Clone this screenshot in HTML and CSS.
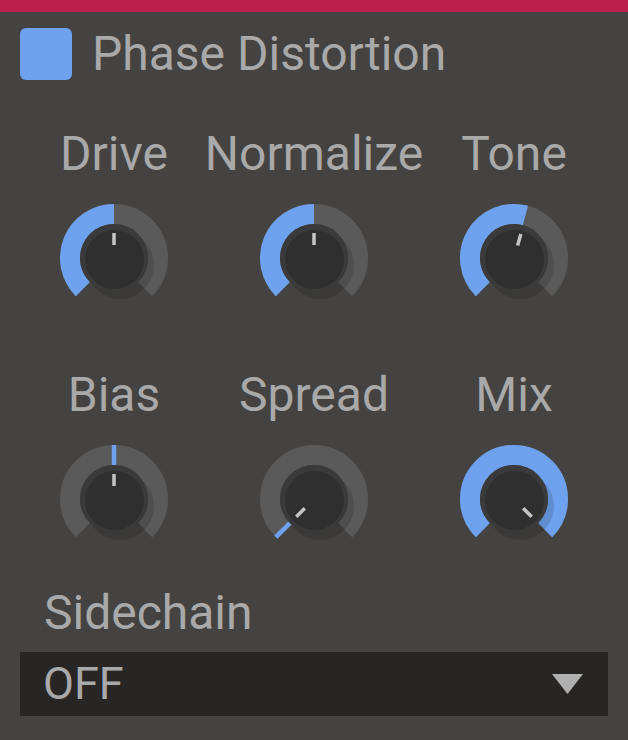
FILE: index.html
```html
<!DOCTYPE html>
<html lang="en">
<head>
    <meta charset="UTF-8">
    <meta name="viewport" content="width=device-width, initial-scale=1.0">
    <title>Phase Distortion</title>
    <link rel="stylesheet" href="styles.css">
</head>
<body>
    <div class="top-bar"></div>

    <div class="header">
        <div class="enable-box"></div>
        <div class="title">Phase Distortion</div>
    </div>

    <div class="knobs">
        <div class="knob">
            <div class="knob-label">Drive</div>
            <svg class="knob-dial" width="120" height="120" viewBox="0 0 120 120">
                <path class="track" d="M28.89 91.11 A44 44 0 1 1 91.11 91.11"/>
                <path class="value" d="M28.89 91.11 A44 44 0 0 1 60 16"/>
                <circle class="shadow" cx="66" cy="67" r="34"/>
                <circle class="rim" cx="60" cy="60" r="34"/>
                <circle class="cap" cx="60.5" cy="61.5" r="29.5"/>
                <line class="pointer" x1="60" y1="35" x2="60" y2="47" transform="rotate(0 60 60)"/>
            </svg>
        </div>
        <div class="knob">
            <div class="knob-label">Normalize</div>
            <svg class="knob-dial" width="120" height="120" viewBox="0 0 120 120">
                <path class="track" d="M28.89 91.11 A44 44 0 1 1 91.11 91.11"/>
                <path class="value" d="M28.89 91.11 A44 44 0 0 1 60 16"/>
                <circle class="shadow" cx="66" cy="67" r="34"/>
                <circle class="rim" cx="60" cy="60" r="34"/>
                <circle class="cap" cx="60.5" cy="61.5" r="29.5"/>
                <line class="pointer" x1="60" y1="35" x2="60" y2="47" transform="rotate(0 60 60)"/>
            </svg>
        </div>
        <div class="knob">
            <div class="knob-label">Tone</div>
            <svg class="knob-dial" width="120" height="120" viewBox="0 0 120 120">
                <path class="track" d="M28.89 91.11 A44 44 0 1 1 91.11 91.11"/>
                <path class="value" d="M28.89 91.11 A44 44 0 0 1 71.39 17.50"/>
                <circle class="shadow" cx="66" cy="67" r="34"/>
                <circle class="rim" cx="60" cy="60" r="34"/>
                <circle class="cap" cx="60.5" cy="61.5" r="29.5"/>
                <line class="pointer" x1="60" y1="35" x2="60" y2="47" transform="rotate(16 60 60)"/>
            </svg>
        </div>

        <div class="knob">
            <div class="knob-label">Bias</div>
            <svg class="knob-dial" width="120" height="120" viewBox="0 0 120 120">
                <path class="track" d="M28.89 91.11 A44 44 0 1 1 91.11 91.11"/>
                <line class="tick" x1="60" y1="6" x2="60" y2="26"/>
                <circle class="shadow" cx="66" cy="67" r="34"/>
                <circle class="rim" cx="60" cy="60" r="34"/>
                <circle class="cap" cx="60.5" cy="61.5" r="29.5"/>
                <line class="pointer" x1="60" y1="35" x2="60" y2="47" transform="rotate(0 60 60)"/>
            </svg>
        </div>
        <div class="knob">
            <div class="knob-label">Spread</div>
            <svg class="knob-dial" width="120" height="120" viewBox="0 0 120 120">
                <path class="track" d="M28.89 91.11 A44 44 0 1 1 91.11 91.11"/>
                <line class="tick" x1="60" y1="6" x2="60" y2="26" transform="rotate(-135 60 60)"/>
                <circle class="shadow" cx="66" cy="67" r="34"/>
                <circle class="rim" cx="60" cy="60" r="34"/>
                <circle class="cap" cx="60.5" cy="61.5" r="29.5"/>
                <line class="pointer" x1="60" y1="35" x2="60" y2="47" transform="rotate(-135 60 60)"/>
            </svg>
        </div>
        <div class="knob">
            <div class="knob-label">Mix</div>
            <svg class="knob-dial" width="120" height="120" viewBox="0 0 120 120">
                <path class="track" d="M28.89 91.11 A44 44 0 1 1 91.11 91.11"/>
                <path class="value" d="M28.89 91.11 A44 44 0 1 1 91.11 91.11"/>
                <circle class="shadow" cx="66" cy="67" r="34"/>
                <circle class="rim" cx="60" cy="60" r="34"/>
                <circle class="cap" cx="60.5" cy="61.5" r="29.5"/>
                <line class="pointer" x1="60" y1="35" x2="60" y2="47" transform="rotate(135 60 60)"/>
            </svg>
        </div>
    </div>

    <div class="sidechain-label">Sidechain</div>
    <div class="dropdown">
        <span class="dropdown-value">OFF</span>
        <svg class="dropdown-arrow" width="31" height="20" viewBox="0 0 31 20">
            <polygon points="0,0 31,0 15.5,20"/>
        </svg>
    </div>
</body>
</html>
```

FILE: styles.css
```css
body {
    margin: 0;
    padding: 0;
    width: 628px;
    height: 740px;
    overflow: hidden;
    background: #444341;
    color: #a9a9a9;
    font-family: Roboto, 'Liberation Sans', sans-serif;
}

.top-bar {
    height: 12px;
    background: #bc1f4b;
}

.header {
    display: flex;
    align-items: center;
    padding: 16px 20px 0;
    height: 52px;
}

.enable-box {
    width: 52px;
    height: 52px;
    border-radius: 6px;
    background: #6fa2ee;
    flex-shrink: 0;
}

.title {
    margin-left: 20px;
    font-size: 48px;
    line-height: 52px;
}

.knobs {
    display: grid;
    grid-template-columns: repeat(3, 200px);
    row-gap: 50px;
    padding: 0 14px;
    margin-top: 47px;
}

.knob {
    display: flex;
    flex-direction: column;
    align-items: center;
}

.knob-label {
    font-size: 48px;
    line-height: 54px;
    white-space: nowrap;
}

.knob-dial {
    display: block;
    margin-top: 17px;
}

.knob-dial .track {
    fill: none;
    stroke: #5a5a5a;
    stroke-width: 20;
}

.knob-dial .value {
    fill: none;
    stroke: #6fa2ee;
    stroke-width: 20;
}

.knob-dial .tick {
    stroke: #6fa2ee;
    stroke-width: 4.5;
}

.knob-dial .shadow {
    fill: rgba(0, 0, 0, 0.13);
}

.knob-dial .rim {
    fill: #3a3a3a;
}

.knob-dial .cap {
    fill: #2f2f2f;
}

.knob-dial .pointer {
    stroke: #c4c4c4;
    stroke-width: 3.5;
}

.sidechain-label {
    margin-top: 27px;
    padding-left: 44px;
    font-size: 48px;
    line-height: 54px;
}

.dropdown {
    display: flex;
    align-items: center;
    justify-content: space-between;
    margin: 12px 20px 0;
    height: 64px;
    padding: 0 25px 0 23px;
    background: #272625;
}

.dropdown-value {
    font-size: 45px;
    line-height: 64px;
}

.dropdown-arrow {
    display: block;
    fill: #b0b0b0;
}
```
